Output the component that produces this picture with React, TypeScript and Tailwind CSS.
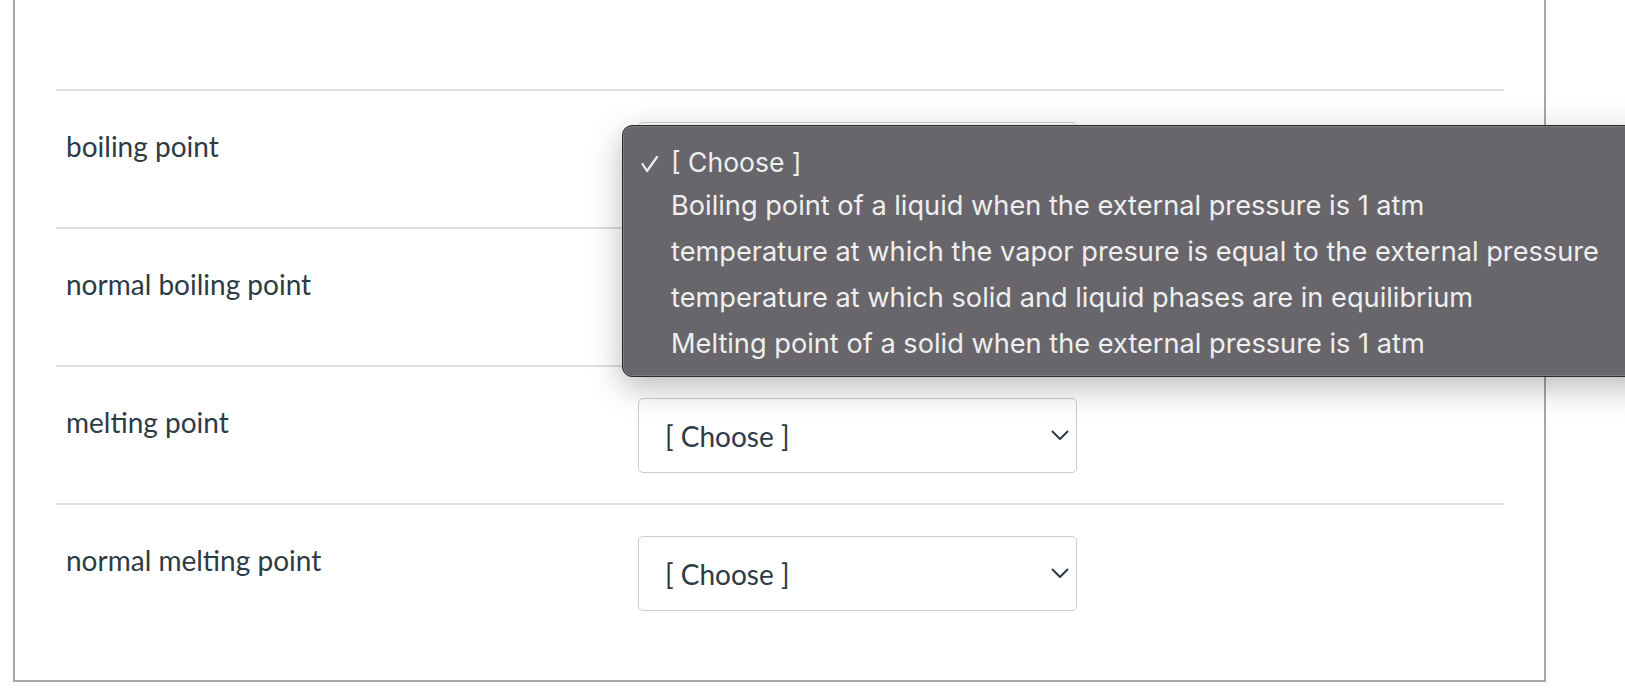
import React from 'react';

const rows = ['boiling point', 'normal boiling point', 'melting point', 'normal melting point'];

const options = [
  'Boiling point of a liquid when the external pressure is 1 atm',
  'temperature at which the vapor presure is equal to the external pressure',
  'temperature at which solid and liquid phases are in equilibrium',
  'Melting point of a solid when the external pressure is 1 atm',
];

function Chevron() {
  return (
    <svg width="18" height="11" viewBox="0 0 18 11" fill="none">
      <polyline points="1.5,1.5 9,9 16.5,1.5" stroke="#2d3b45" strokeWidth="2" strokeLinecap="round" strokeLinejoin="round" />
    </svg>
  );
}

function FakeSelect() {
  return (
    <div className="flex h-[75px] w-[439px] items-center justify-between rounded-[5px] border-[1.5px] border-[#c7cdd1] bg-white pl-[26px] pr-[7px] text-[28px] leading-[34px] text-[#2d3b45]">
      <span>[ Choose ]</span>
      <Chevron />
    </div>
  );
}

export default function App() {
  return (
    <div className="relative h-[690px] w-[1625px] overflow-hidden bg-white font-['Lato',sans-serif]">
      {/* question panel */}
      <div className="ml-[13px] h-[682px] w-[1533px] border-x-2 border-b-2 border-[#a6a6a6] pl-[41px] pr-[40px] pt-[89px]">
        {rows.map((label) => (
          <div key={label} className="flex items-start border-t-2 border-[#dedede] pb-[30px] pt-[31px]">
            <div className="w-[582px] pl-[10px] pt-[7px] text-[28px] leading-[34px] text-[#2d3b45]">{label}</div>
            <FakeSelect />
          </div>
        ))}
      </div>

      {/* open native popup */}
      <div className="absolute left-[622px] top-[125px] h-[252px] w-[1030px] rounded-[10px] border border-[#2a2a2c] bg-[#68666b] pt-[15px] font-['Inter',sans-serif] text-[#efefef] shadow-[0_10px_32px_rgba(0,0,0,0.28)] ring-1 ring-inset ring-white/15">
        <div className="flex items-center text-[26.5px] leading-[42px]">
          <div className="w-[48px] pl-[18px]">
            <svg width="18" height="18" viewBox="0 0 18 18" fill="none" className="mt-[3px]">
              <polyline points="1.5,9 6,16 16,2" stroke="#efefef" strokeWidth="2.2" strokeLinecap="round" strokeLinejoin="round" />
            </svg>
          </div>
          <span>[ Choose ]</span>
        </div>
        {options.map((o) => (
          <div key={o} className="pl-[48px] text-[27.2px] leading-[46px] whitespace-nowrap">
            {o}
          </div>
        ))}
      </div>
    </div>
  );
}
